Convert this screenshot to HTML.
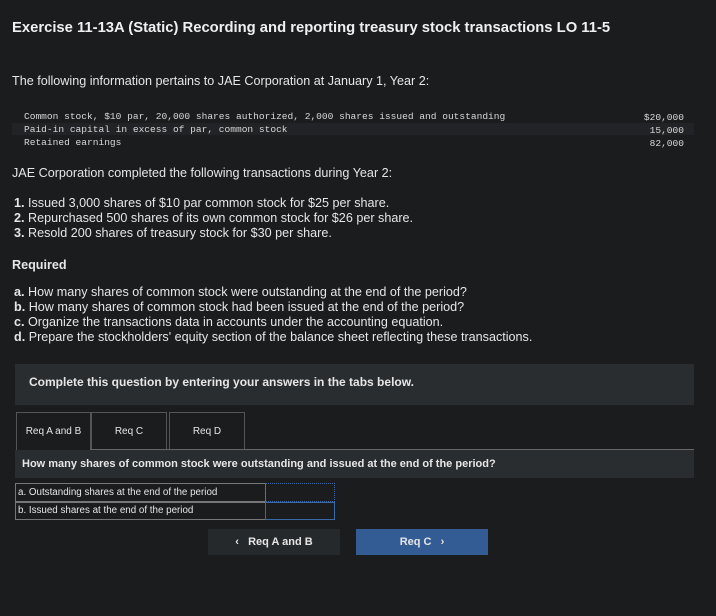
<!DOCTYPE html>
<html><head><style>
body{margin:0;width:716px;height:616px;background:#1b1c1e;color:#e6e6e6;font-family:"Liberation Sans",sans-serif;position:relative;overflow:hidden}
.a{position:absolute;white-space:nowrap}
.m{font-family:"Liberation Mono",monospace;font-size:9.55px;color:#d8d8d8}
.t{font-size:12.6px}
b{font-weight:bold}
</style></head><body>
<div class="a" style="left:12px;top:20px;font-size:14.8px;font-weight:bold;color:#f0f0f0">Exercise 11-13A (Static) Recording and reporting treasury stock transactions LO 11-5</div>
<div class="a t" style="left:12px;top:74px">The following information pertains to JAE Corporation at January 1, Year 2:</div>
<div class="a" style="left:12px;top:123px;width:682px;height:12px;background:#222326"></div>
<div class="a m" style="left:24px;top:111px">Common stock, $10 par, 20,000 shares authorized, 2,000 shares issued and outstanding</div>
<div class="a m" style="left:24px;top:124px">Paid-in capital in excess of par, common stock</div>
<div class="a m" style="left:24px;top:137px">Retained earnings</div>
<div class="a m" style="right:32px;top:111px;text-align:right;line-height:13px">$20,000<br>15,000<br>82,000</div>
<div class="a t" style="left:12px;top:166px">JAE Corporation completed the following transactions during Year 2:</div>
<div class="a t" style="left:14px;top:196px;line-height:15px"><b>1.</b> Issued 3,000 shares of $10 par common stock for $25 per share.<br><b>2.</b> Repurchased 500 shares of its own common stock for $26 per share.<br><b>3.</b> Resold 200 shares of treasury stock for $30 per share.</div>
<div class="a t" style="left:12px;top:258px;font-weight:bold">Required</div>
<div class="a t" style="left:14px;top:285px;line-height:15px"><b>a.</b> How many shares of common stock were outstanding at the end of the period?<br><b>b.</b> How many shares of common stock had been issued at the end of the period?<br><b>c.</b> Organize the transactions data in accounts under the accounting equation.<br><b>d.</b> Prepare the stockholders' equity section of the balance sheet reflecting these transactions.</div>
<div class="a" style="left:15px;top:364px;width:679px;height:41px;background:#2a2d30"></div>
<div class="a" style="left:29px;top:375px;font-size:12px;font-weight:bold">Complete this question by entering your answers in the tabs below.</div>
<div class="a" style="left:16px;top:412px;width:73px;height:38px;border:1px solid #555;border-bottom:none;background:#1b1c1e;font-size:10px;line-height:38px;text-align:center">Req A and B</div>
<div class="a" style="left:91px;top:412px;width:74px;height:37px;border:1px solid #555;border-bottom:none;font-size:10px;line-height:38px;text-align:center">Req C</div>
<div class="a" style="left:169px;top:412px;width:74px;height:37px;border:1px solid #555;border-bottom:none;font-size:10px;line-height:38px;text-align:center">Req D</div>
<div class="a" style="left:90px;top:449px;width:604px;height:1px;background:#666"></div>
<div class="a" style="left:15px;top:450px;width:679px;height:28px;background:#2a2d30"></div>
<div class="a" style="left:22px;top:458px;font-size:11px;font-weight:bold">How many shares of common stock were outstanding and issued at the end of the period?</div>
<div class="a" style="left:15px;top:483px;box-sizing:border-box;width:251px;height:19px;border:1px solid #777;font-size:9.8px;line-height:17px;padding-left:2px">a. Outstanding shares at the end of the period</div>
<div class="a" style="left:15px;top:502px;width:251px;height:18px;border:1px solid #777;box-sizing:border-box;font-size:9.8px;line-height:16px;padding-left:2px">b. Issued shares at the end of the period</div>
<div class="a" style="left:265px;top:483px;width:70px;height:19px;border:1px dotted #3b68a8;box-sizing:border-box"></div>
<div class="a" style="left:265px;top:502px;width:70px;height:18px;border:1px solid #3b68a8;box-sizing:border-box"></div>
<div class="a" style="left:208px;top:529px;width:132px;height:26px;background:#26292c;font-size:11px;line-height:26px;text-align:center;font-weight:bold">‹&nbsp;&nbsp; Req A and B</div>
<div class="a" style="left:356px;top:529px;width:132px;height:26px;background:#345c94;font-size:11px;line-height:26px;text-align:center;font-weight:bold">Req C &nbsp;&nbsp;›</div>
</body></html>
